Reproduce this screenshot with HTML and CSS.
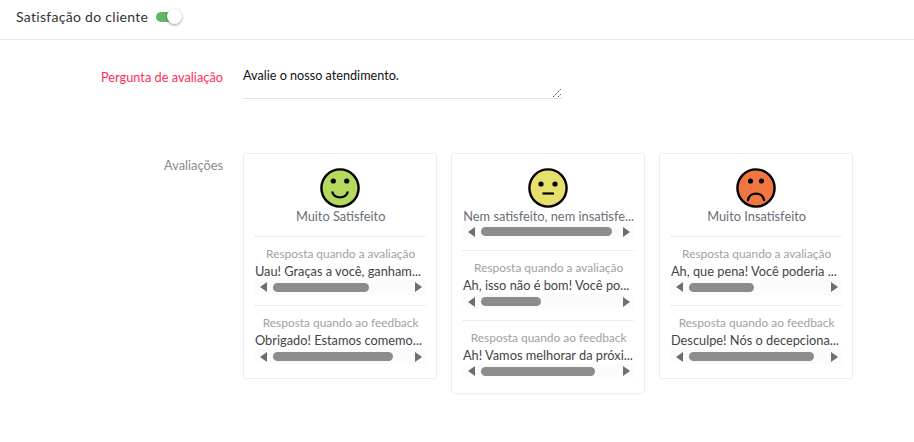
FILE: index.html
```html
<!DOCTYPE html>
<html lang="pt">
<head>
<meta charset="utf-8">
<title>Satisfação do cliente</title>
<link rel="stylesheet" href="styles.css">
</head>
<body>
<header class="topbar">
  <h1 class="topbar-title">Satisfação do cliente</h1>
  <span class="toggle"><span class="toggle-track"></span><span class="toggle-knob"></span></span>
</header>
<main class="form">
  <div class="row row-question">
    <div class="row-label required">Pergunta de avaliação</div>
    <div class="question">
      <div class="question-text">Avalie o nosso atendimento.</div>
      <svg class="grip" width="10" height="10" viewBox="0 0 10 10"><path d="M1 9 9 1M6 9 9 6" stroke="#444" stroke-width="1" stroke-dasharray="1.4 1" fill="none"/></svg>
    </div>
  </div>
  <div class="row">
    <div class="row-label">Avaliações</div>
    <div class="cards">
      <section class="card">
        <div class="face-wrap"><svg class="face" width="40" height="40" viewBox="0 0 40 40"><circle cx="20" cy="20" r="18.600" fill="#b5d95c" stroke="#000" stroke-width="2.400"/><circle cx="13.300" cy="13" r="2.600" fill="#000"/><circle cx="26.700" cy="13" r="2.600" fill="#000"/><path d="M12.500 24.500c2 6.500 13 6.500 15 0" fill="none" stroke="#000" stroke-width="2.400" stroke-linecap="round"/></svg></div>
        <div class="card-title">Muito Satisfeito</div>
        <div class="block">
          <div class="block-label">Resposta quando a avaliação</div>
          <div class="block-text">Uau! Graças a você, ganham...</div>
          <div class="scroll"><span class="arrow-l"></span><span class="rail"><span class="thumb" style="width:96px"></span></span><span class="arrow-r"></span></div>
        </div>
        <div class="block">
          <div class="block-label">Resposta quando ao feedback</div>
          <div class="block-text">Obrigado! Estamos comemo...</div>
          <div class="scroll"><span class="arrow-l"></span><span class="rail"><span class="thumb" style="width:120px"></span></span><span class="arrow-r"></span></div>
        </div>
      </section>
      <section class="card">
        <div class="face-wrap"><svg class="face" width="40" height="40" viewBox="0 0 40 40"><circle cx="20" cy="20" r="18.600" fill="#e8e06c" stroke="#000" stroke-width="2.400"/><circle cx="13" cy="16" r="2.600" fill="#000"/><circle cx="27" cy="16" r="2.600" fill="#000"/><path d="M14.500 25.500h11.500" fill="none" stroke="#000" stroke-width="2.200"/></svg></div>
        <div class="card-title">Nem satisfeito, nem insatisfe...</div>
        <div class="scroll scroll-title"><span class="arrow-l"></span><span class="rail"><span class="thumb" style="width:131px"></span></span><span class="arrow-r"></span></div>
        <div class="block">
          <div class="block-label">Resposta quando a avaliação</div>
          <div class="block-text">Ah, isso não é bom! Você po...</div>
          <div class="scroll"><span class="arrow-l"></span><span class="rail"><span class="thumb" style="width:60px"></span></span><span class="arrow-r"></span></div>
        </div>
        <div class="block">
          <div class="block-label">Resposta quando ao feedback</div>
          <div class="block-text">Ah! Vamos melhorar da próxi...</div>
          <div class="scroll"><span class="arrow-l"></span><span class="rail"><span class="thumb" style="width:114px"></span></span><span class="arrow-r"></span></div>
        </div>
      </section>
      <section class="card">
        <div class="face-wrap"><svg class="face" width="40" height="40" viewBox="0 0 40 40"><circle cx="20" cy="20" r="18.600" fill="#f27641" stroke="#000" stroke-width="2.400"/><circle cx="14.500" cy="13" r="2.600" fill="#000"/><circle cx="25.500" cy="13" r="2.600" fill="#000"/><path d="M12 32c1.500-8.500 14.500-8.500 16 0" fill="none" stroke="#000" stroke-width="2.400" stroke-linecap="round"/></svg></div>
        <div class="card-title">Muito Insatisfeito</div>
        <div class="block">
          <div class="block-label">Resposta quando a avaliação</div>
          <div class="block-text">Ah, que pena! Você poderia ...</div>
          <div class="scroll"><span class="arrow-l"></span><span class="rail"><span class="thumb" style="width:65px"></span></span><span class="arrow-r"></span></div>
        </div>
        <div class="block">
          <div class="block-label">Resposta quando ao feedback</div>
          <div class="block-text">Desculpe! Nós o decepciona...</div>
          <div class="scroll"><span class="arrow-l"></span><span class="rail"><span class="thumb" style="width:125px"></span></span><span class="arrow-r"></span></div>
        </div>
      </section>
    </div>
  </div>
</main>
</body>
</html>
```

FILE: styles.css
```css
* { box-sizing: border-box; }
html, body { margin: 0; padding: 0; }
body {
  width: 914px;
  height: 442px;
  overflow: hidden;
  background: #fff;
  font-family: Lato, "Liberation Sans", sans-serif;
  font-size: 12.8px;
  color: #333;
}
.topbar {
  height: 40px;
  display: flex;
  align-items: center;
  gap: 8px;
  padding: 0 16px 5px;
  border-bottom: 1px solid #e8e8ec;
}
.topbar-title {
  margin: 0;
  font-size: 14px;
  letter-spacing: 0.3px;
  font-weight: 400;
  color: #333;
  line-height: 18px;
}
.toggle {
  position: relative;
  display: block;
  width: 26px;
  height: 16px;
}
.toggle-track {
  position: absolute;
  left: 0;
  top: 3px;
  width: 22px;
  height: 10px;
  border-radius: 5px;
  background: #62b565;
}
.toggle-knob {
  position: absolute;
  right: 0;
  top: 0;
  width: 15px;
  height: 15px;
  border-radius: 50%;
  background: #fff;
  box-shadow: 0 1px 3px rgba(0,0,0,.4);
}
.form { padding-top: 26px; }
.row { display: flex; align-items: flex-start; gap: 20px; }
.row-question { height: 87px; }
.row-label {
  width: 223px;
  text-align: right;
  color: #8a8a8f;
  line-height: 18px;
  padding-top: 3px;
}
.required { color: #ff2e55; padding-top: 2px; }
.question {
  position: relative;
  width: 319px;
  height: 33px;
  border-bottom: 1px solid #e0e0e6;
}
.question-text { color: #111; font-size: 12.65px; line-height: 18px; padding-top: 1px; }
.grip { position: absolute; right: 0; bottom: 0; }
.cards { display: flex; align-items: flex-start; gap: 13.7px; }
.card {
  width: 194.3px;
  border: 1px solid #eeeeee;
  border-radius: 3px;
  padding: 14px 10px 14px 11px;
  box-shadow: 0 0 2px rgba(0,0,0,.04);
}
.face-wrap { display: flex; justify-content: center; height: 39px; padding-right: 2px; }
.face { display: block; }
.card-title {
  height: 18px;
  line-height: 18px;
  text-align: center;
  color: #6a6e76;
  white-space: nowrap;
}
.block { margin-top: 10.6px; border-top: 1px dotted #dcdcdc; padding-top: 8px; }
.block-label {
  height: 18px;
  line-height: 17px;
  font-size: 11.9px;
  text-align: center;
  color: #a0a0a5;
  white-space: nowrap;
}
.block-text {
  height: 17px;
  line-height: 17px;
  color: #444;
  white-space: nowrap;
}
.scroll {
  display: flex;
  align-items: center;
  height: 15px;
  background: #fbfbfb;
}
.scroll-title { margin-top: -0.6px; }
.arrow-l, .arrow-r { flex: none; width: 0; height: 0; border-style: solid; border-color: transparent; }
.arrow-l { margin-left: 5px; border-width: 5px 7px 5px 0; border-right-color: #6e6e6e; }
.arrow-r { margin-right: 4px; border-width: 5px 0 5px 7px; border-left-color: #6e6e6e; }
.rail { flex: 1; padding-left: 6px; }
.thumb { display: block; height: 9px; border-radius: 4.5px; background: #8c8c8c; }
```
